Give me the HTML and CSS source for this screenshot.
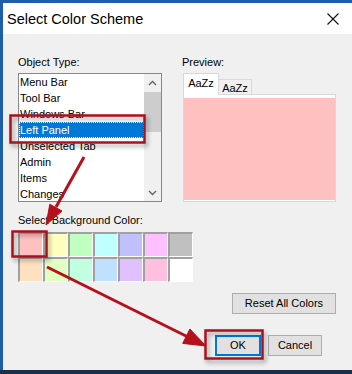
FILE: index.html
```html
<!DOCTYPE html>
<html>
<head>
<meta charset="utf-8">
<link rel="stylesheet" href="styles.css">
</head>
<body>
<div class="window">
  <div class="titlebar">
    <span class="title">Select Color Scheme</span>
    <svg class="close" width="14" height="14" viewBox="0 0 14 14"><path d="M1.5 1.5 L12.5 12.5 M12.5 1.5 L1.5 12.5" stroke="#111" stroke-width="1.1" fill="none"/></svg>
  </div>
  <div class="content">
    <div class="toprow">
      <div class="col">
        <div class="label">Object Type:</div>
        <div class="listbox">
          <div class="items">
            <div class="item">Menu Bar</div>
            <div class="item">Tool Bar</div>
            <div class="item">Windows Bar</div>
            <div class="item selected">Left Panel</div>
            <div class="item">Unselected Tab</div>
            <div class="item">Admin</div>
            <div class="item">Items</div>
            <div class="item">Changes</div>
          </div>
          <div class="scrollbar">
            <div class="sbtn"><svg width="9" height="6" viewBox="0 0 9 6"><path d="M1 5 L4.5 1.5 L8 5" stroke="#606060" stroke-width="1.3" fill="none"/></svg></div>
            <div class="track"><div class="thumb"></div></div>
            <div class="sbtn"><svg width="9" height="6" viewBox="0 0 9 6"><path d="M1 1 L4.5 4.5 L8 1" stroke="#606060" stroke-width="1.3" fill="none"/></svg></div>
          </div>
        </div>
      </div>
      <div class="col">
        <div class="label">Preview:</div>
        <div class="preview">
          <div class="tabs">
            <div class="tab active">AaZz</div>
            <div class="tab">AaZz</div>
          </div>
          <div class="panel"><div class="sample"></div></div>
        </div>
      </div>
    </div>
    <div class="label bglabel">Select Background Color:</div>
    <div class="swatches">
      <div class="sw c1"></div><div class="sw c2"></div><div class="sw c3"></div><div class="sw c4"></div><div class="sw c5"></div><div class="sw c6"></div><div class="sw c7"></div>
      <div class="sw c8"></div><div class="sw c9"></div><div class="sw c10"></div><div class="sw c11"></div><div class="sw c12"></div><div class="sw c13"></div><div class="sw c14"></div>
    </div>
    <div class="resetrow"><div class="btn reset">Reset All Colors</div></div>
    <div class="okrow">
      <div class="btn ok">OK</div>
      <div class="btn cancel">Cancel</div>
    </div>
  </div>
</div>
<svg class="annot" width="352" height="374" viewBox="0 0 352 374">
  <g class="boxes" fill="none" stroke="#a8121e" stroke-width="2.5">
    <rect x="10.5" y="115.5" width="134" height="27"/>
    <rect x="12.5" y="231.5" width="34" height="25"/>
    <rect x="205.5" y="330.5" width="57" height="28"/>
  </g>
  <g fill="#b5101c" stroke="#b5101c">
    <line x1="84" y1="157" x2="56" y2="207" stroke-width="3"/>
    <polygon points="46,225 62,211 49.8,204.2" stroke-width="1"/>
    <line x1="47" y1="267" x2="187" y2="336.5" stroke-width="3"/>
    <polygon points="206,346 182.7,343.4 189.9,329" stroke-width="1"/>
  </g>
</svg>
</body>
</html>
```
FILE: styles.css
```css
html, body {
  margin: 0;
  padding: 0;
  background: #18304a;
  width: 352px;
  height: 374px;
  overflow: hidden;
  position: relative;
}
.window {
  height: 370px;
  box-sizing: border-box;
  border-left: 3px solid #1d5ea6;
  border-top: 3px solid #1d5ea6;
  background: #f0f0f0;
  font-family: "Liberation Sans", Arial, sans-serif;
  font-size: 11px;
  color: #000;
}
.titlebar {
  height: 31px;
  background: #fff;
  display: flex;
  align-items: center;
  justify-content: space-between;
  padding-left: 4px;
  padding-right: 12px;
}
.title {
  font-size: 14.5px;
  color: #000;
}
.close { display: block; }
.content {
  padding: 20px 16px 0 15px;
}
.toprow {
  display: grid;
  grid-template-columns: 144px 154px;
  column-gap: 20px;
}
.label {
  height: 16px;
  line-height: 16px;
  margin-bottom: 3px;
  white-space: nowrap;
}
.listbox {
  height: 129px;
  box-sizing: border-box;
  border: 1px solid #828790;
  background: #fff;
  display: flex;
}
.items {
  flex: 1;
  display: flex;
  flex-direction: column;
}
.item {
  height: 16px;
  line-height: 16px;
  padding-left: 1px;
  white-space: nowrap;
}
.item.selected {
  background: #0078d7;
  color: #fff;
  outline: 1px dotted #fff;
  outline-offset: -1px;
}
.scrollbar {
  width: 17px;
  background: #f0f0f0;
  display: flex;
  flex-direction: column;
}
.sbtn {
  height: 17px;
  display: flex;
  align-items: center;
  justify-content: center;
}
.track {
  flex: 1;
}
.thumb {
  height: 40px;
  margin-top: 1px;
  background: #cdcdcd;
}
.preview {
  margin-left: 1px;
}
.tabs {
  display: flex;
  align-items: flex-end;
  height: 21px;
}
.tab {
  box-sizing: border-box;
  text-align: center;
  border: 1px solid #d9d9d9;
  border-bottom: none;
}
.tab.active {
  width: 36px;
  height: 21px;
  background: #fff;
  line-height: 18px;
  position: relative;
  z-index: 1;
  margin-bottom: -1px;
  height: 22px;
}
.tab:not(.active) {
  width: 33px;
  height: 15px;
  line-height: 17px;
  background: #f0f0f0;
  border-left: none;
  overflow: hidden;
}
.panel {
  height: 108px;
  box-sizing: border-box;
  border: 1px solid #d9d9d9;
  background: #fff;
  padding: 3px 0 1px 0;
}
.sample {
  height: 100%;
  background: #ffc0c0;
}
.bglabel {
  margin-top: 10px;
  margin-bottom: 4px;
}
.swatches {
  display: grid;
  grid-template-columns: repeat(7, 25px);
  grid-auto-rows: 25px;
}
.sw {
  box-sizing: border-box;
  border-top: 2px solid #a0a0a0;
  border-left: 2px solid #a0a0a0;
  border-right: 1px solid #fff;
  border-bottom: 1px solid #fff;
}
.c1 { background: #ffc0c0; }
.c2 { background: #ffffc0; }
.c3 { background: #c0ffc0; }
.c4 { background: #c0ffff; }
.c5 { background: #c0c0ff; }
.c6 { background: #ffc0ff; }
.c7 { background: #c0c0c0; }
.c8 { background: #ffe0c0; }
.c9 { background: #e0ffc0; }
.c10 { background: #c0ffe0; }
.c11 { background: #c0e0ff; }
.c12 { background: #e0c0ff; }
.c13 { background: #ffc0e0; }
.c14 { background: #ffffff; }
.resetrow {
  display: flex;
  justify-content: flex-end;
  margin-top: 11px;
}
.btn {
  box-sizing: border-box;
  height: 21px;
  line-height: 19px;
  text-align: center;
  border: 1px solid #adadad;
  background: #e1e1e1;
}
.reset { width: 104px; }
.okrow {
  display: flex;
  justify-content: flex-end;
  gap: 7px;
  margin-top: 21px;
  padding-right: 14px;
}
.ok {
  width: 46px;
  border: 2px solid #0078d7;
  line-height: 17px;
}
.cancel { width: 54px; }
.annot {
  position: absolute;
  left: 0;
  top: 0;
  pointer-events: none;
}
.boxes {
  filter: drop-shadow(2px 3px 2px rgba(0,0,0,0.35));
}
```
